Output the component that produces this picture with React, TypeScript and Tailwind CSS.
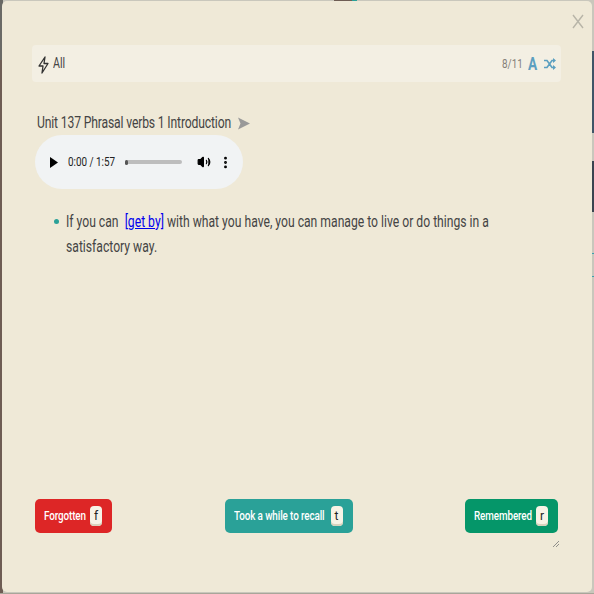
import { Volume2, EllipsisVertical } from "lucide-react";
import type { ReactNode } from "react";

// the reference font is a condensed one, so squeeze the installed font to fit
function Narrow({ className, children }: { className: string; children: ReactNode }) {
  return (
    <span className={`block shrink-0 ${className}`}>
      <span className="block w-max origin-left scale-x-[.76] whitespace-nowrap">{children}</span>
    </span>
  );
}

function KeyCap({ label }: { label: string }) {
  return (
    <span className="flex h-[20px] w-[12px] shrink-0 items-center justify-center rounded-[4px] bg-[#f7f3e6] text-[12px] font-normal text-[#222] shadow-[inset_0_-2px_0_#d8d2bd]">
      {label}
    </span>
  );
}

function AnswerButton({ label, keyName, color, textWidth }: { label: string; keyName: string; color: string; textWidth: string }) {
  return (
    <button className={`flex h-[34px] items-center gap-[4px] rounded-[5px] pl-[9px] pr-[10px] text-[13px] font-medium tracking-[-0.15px] text-white ${color}`}>
      <Narrow className={textWidth}>{label}</Narrow>
      <KeyCap label={keyName} />
    </button>
  );
}

export default function App() {
  return (
    <div className="relative h-[594px] w-[594px] overflow-hidden bg-[#c9c7bc] font-['Roboto',sans-serif]">
      {/* page behind the modal, only slivers show */}
      <div className="absolute bottom-0 left-0 top-[60px] w-[3px] bg-[#6e5d54]" />
      <div className="absolute left-0 top-0 h-[60px] w-[3px] bg-[#6a6a66]" />
      <div className="absolute left-[334px] top-0 h-[2px] w-[18px] bg-[#6e5d54]" />
      <div className="absolute left-[352px] top-0 h-[2px] w-[5px] bg-[#2aa198]" />
      <div className="absolute right-0 top-[51px] h-[82px] w-[3px] bg-[#3f5568]" />
      <div className="absolute right-0 top-[161px] h-[51px] w-[3px] bg-[#3a4450]" />
      <div className="absolute right-0 top-[253px] h-[24px] w-[3px] border-y border-[#3aa0b0]" />
      <div className="absolute bottom-0 left-0 h-[1px] w-full bg-[#a8a699]" />

      <div className="absolute bottom-[2px] left-[2px] right-[2px] top-[1px] flex flex-col rounded-[5px] bg-[#efe9d7] pl-[30px] pr-[31px] pt-[9px]">
        {/* Close */}
        <div className="flex h-[35px] justify-end">
          <svg width="12" height="15" viewBox="0 0 12 15" className="-mr-[23px] mt-[4px] text-[#b8b5a8]">
            <path d="M1 1 L11 14 M11 1 L1 14" stroke="currentColor" strokeWidth="1.4" fill="none" />
          </svg>
        </div>

        {/* Top bar */}
        <div className="flex h-[37px] items-center justify-between rounded-[4px] bg-[#f3efe3] pl-[6px] pr-[5px]">
          <div className="flex items-center gap-[4px] text-[14px] text-[#444]">
            <svg width="11" height="18" viewBox="0 0 11 18" className="mt-[3px] text-[#333]">
              <path d="M7 1 L1 10 H5 L4 17 L10 7.5 H6 Z" stroke="currentColor" strokeWidth="1.3" fill="none" strokeLinejoin="round" />
            </svg>
            <Narrow className="w-[12px]">All</Narrow>
          </div>
          <div className="flex items-center gap-[7px]">
            <Narrow className="w-[19px] text-[13px] text-[#85817a]">8/11</Narrow>
            <Narrow className="w-[9px] text-[18px] font-bold leading-none text-[#5b9fc0]">A</Narrow>
            <svg width="12" height="14" viewBox="0 0 12 14" className="text-[#5b9fc0]">
              <path d="M0 3.5 H3 L8 10.5 H10.5 M0 10.5 H3 L8 3.5 H10.5" stroke="currentColor" strokeWidth="1.6" fill="none" />
              <path d="M9 1 L12 3.5 L9 6 Z M9 8 L12 10.5 L9 13 Z" fill="currentColor" />
            </svg>
          </div>
        </div>

        {/* Unit */}
        <div className="ml-[5px] mt-[31px] flex items-center gap-[7px] text-[16px] leading-[20px] tracking-[-0.2px] text-[#444]">
          <Narrow className="w-[194px]">Unit 137 Phrasal verbs 1 Introduction</Narrow>
          <svg width="12" height="13" viewBox="0 0 12 13" className="text-[#999]">
            <path d="M0 0.5 L12 6.5 L0 12.5 L2.5 6.5 Z" fill="currentColor" />
          </svg>
        </div>

        {/* Audio */}
        <div className="ml-[3px] mt-[2px] flex h-[54px] w-[208px] items-center rounded-[27px] bg-[#f1f3f4] pl-[15px]">
          <svg width="8" height="11" viewBox="0 0 8 11" className="shrink-0">
            <path d="M0 0 L8 5.5 L0 11 Z" fill="#000" />
          </svg>
          <Narrow className="ml-[10px] w-[46px] text-[13px] text-[#222]">0:00 / 1:57</Narrow>
          <div className="relative ml-[11px] h-[4px] w-[57px] shrink-0 rounded-full bg-[#bdbdbd]">
            <div className="absolute left-0 top-[-0.5px] h-[5px] w-[3px] rounded-full bg-[#555]" />
          </div>
          <Volume2 className="ml-[15px] h-[14px] w-[14px] shrink-0 fill-black text-black" />
          <EllipsisVertical className="ml-[7px] h-[15px] w-[15px] shrink-0 text-black" strokeWidth={2.6} />
        </div>

        {/* Definition */}
        <ul className="ml-[34px] mt-[20px] text-[16px] leading-[25px] text-[#444]">
          <li className="relative">
            <span className="absolute -left-[12px] top-[10px] h-[5px] w-[5px] rounded-full bg-[#2aa198]" />
            <span className="block w-[570px] origin-left scale-x-[.76]">
              If you can <a className="ml-[4px] text-[#0000ee] underline">[get by]</a> with what you have, you can manage to live or do things in a satisfactory way.
            </span>
          </li>
        </ul>

        {/* Actions */}
        <div className="mt-auto flex items-center justify-between pl-[3px] pr-[3px]">
          <AnswerButton label="Forgotten" keyName="f" color="bg-[#dd2626]" textWidth="w-[42px]" />
          <AnswerButton label="Took a while to recall" keyName="t" color="bg-[#2aa198]" textWidth="w-[93px]" />
          <AnswerButton label="Remembered" keyName="r" color="bg-[#059669]" textWidth="w-[58px]" />
        </div>
        <div className="flex h-[59px] justify-end pr-[1px] pt-[7px]">
          <svg width="8" height="8" viewBox="0 0 8 8" className="text-[#777]">
            <path d="M1 7 L7 1 M4 7 L7 4" stroke="currentColor" strokeWidth="0.8" />
          </svg>
        </div>
      </div>
    </div>
  );
}
